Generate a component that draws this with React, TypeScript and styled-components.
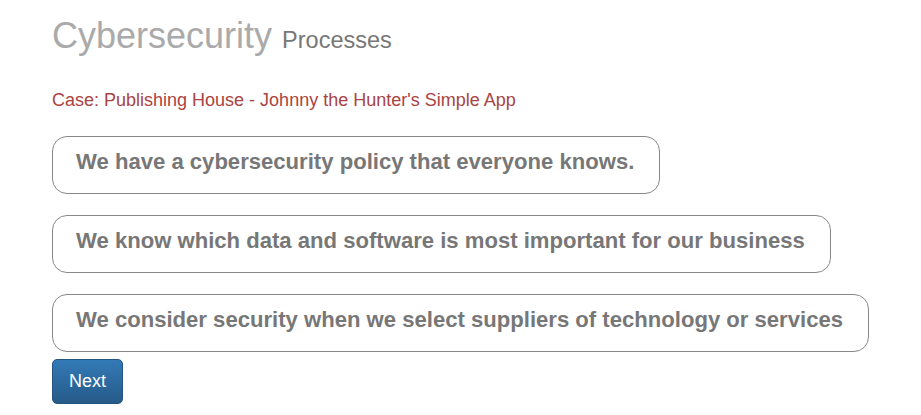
import styled, { createGlobalStyle } from 'styled-components';

const GlobalStyle = createGlobalStyle`
  html, body {
    margin: 0;
    padding: 0;
    background: #fff;
    font-family: "Liberation Sans", Arial, sans-serif;
  }
`;

const Page = styled.div`
  padding: 16px 52px 0;
`;

const Title = styled.h1`
  margin: 0;
  font-size: 36px;
  font-weight: 400;
  line-height: 40px;
  color: #aaaaaa;
`;

const Subtitle = styled.small`
  font-size: 23.5px;
  color: #777777;
`;

const CaseLine = styled.p`
  margin: 29px 0 0;
  font-size: 18px;
  line-height: 22px;
  color: #a94442;
`;

const Questions = styled.div`
  display: flex;
  flex-direction: column;
  align-items: flex-start;
  gap: 21px;
  margin-top: 25px;
`;

const Question = styled.div`
  box-sizing: border-box;
  height: 58px;
  padding: 11px 25px 0 23px;
  border: 1px solid #888888;
  border-radius: 15px;
  font-size: 22.1px;
  font-weight: 700;
  line-height: 28px;
  color: #777777;
`;

const NextButton = styled.button`
  margin-top: 7px;
  width: 71px;
  height: 45px;
  padding: 0;
  border: 1px solid #245580;
  border-radius: 5px;
  background: linear-gradient(to bottom, #337ab7 0%, #265a88 100%);
  color: #fff;
  font-family: "Liberation Sans", Arial, sans-serif;
  font-size: 18px;
  cursor: pointer;
`;

const questions = [
  'We have a cybersecurity policy that everyone knows.',
  'We know which data and software is most important for our business',
  'We consider security when we select suppliers of technology or services',
];

export default function App() {
  return (
    <Page>
      <GlobalStyle />
      <Title>
        Cybersecurity <Subtitle>Processes</Subtitle>
      </Title>
      <CaseLine>Case: Publishing House - Johnny the Hunter's Simple App</CaseLine>
      <Questions>
        {questions.map((q) => (
          <Question key={q}>{q}</Question>
        ))}
      </Questions>
      <NextButton>Next</NextButton>
    </Page>
  );
}
